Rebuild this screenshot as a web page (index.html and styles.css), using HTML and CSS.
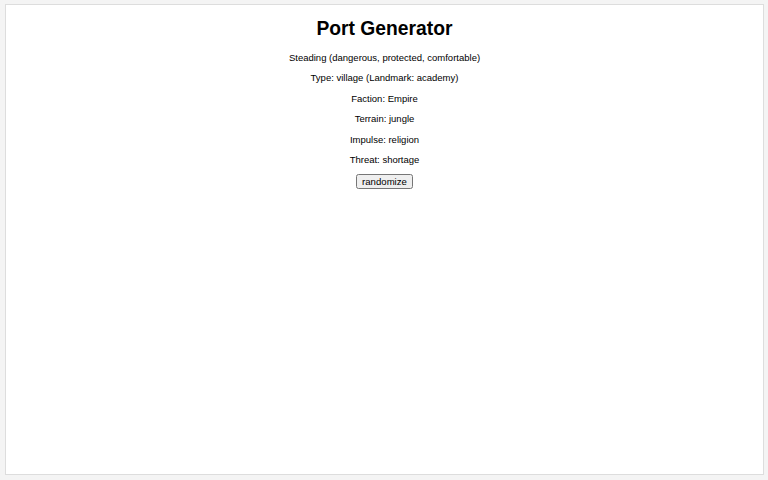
FILE: index.html
```html
<!DOCTYPE html>
<html lang="en">
<head>
    <meta charset="UTF-8">
    <meta name="viewport" content="width=device-width, initial-scale=1.0">
    <title>Port Generator</title>
    <link rel="stylesheet" href="styles.css">
</head>
<body>

    <div class="container">
        <h1>Port Generator</h1>

        <p id="steading">Steading (dangerous, protected, comfortable)</p>
        <p id="type">Type: village (Landmark: academy)</p>
        <p id="faction">Faction: Empire</p>
        <p id="terrain">Terrain: jungle</p>
        <p id="impulse">Impulse: religion</p>
        <p id="threat">Threat: shortage</p>

        <button id="randomize">randomize</button>
    </div>

</body>
</html>
```

FILE: styles.css
```css
body {
    font-family: 'Liberation Sans', Arial, sans-serif;
    background-color: #f4f4f4;
    color: #000;
    margin: 0;
    padding: 4px 4px 5px 5px;
}

/* white sheet holding the generator */
.container {
    background-color: #fff;
    border: 1px solid #ddd;
    box-sizing: border-box;
    height: 471px;
    text-align: center;
    padding-top: 13px;
}

h1 {
    font-size: 19.3px;
    margin: 0 0 12px 0;
}

p {
    font-size: 9.5px;
    line-height: 12px;
    margin: 0 0 8.4px 0;
}

button {
    display: block;
    margin: 0 auto;
    font-family: 'Liberation Sans', Arial, sans-serif;
    font-size: 9.6px;
    line-height: 11px;
    padding: 0 4px;
}
```
